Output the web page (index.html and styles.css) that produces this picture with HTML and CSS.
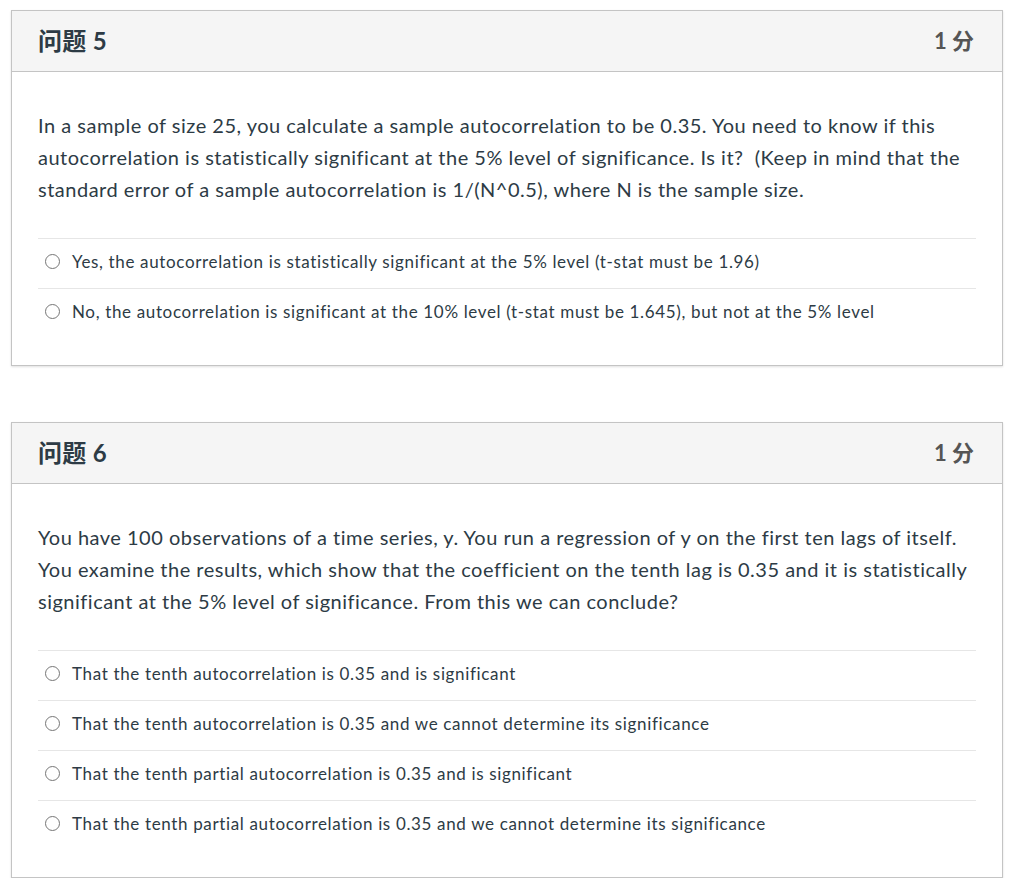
FILE: index.html
```html
<!DOCTYPE html>
<html lang="zh-CN">
<head>
  <meta charset="UTF-8">
  <meta name="viewport" content="width=device-width, initial-scale=1.0">
  <title>测验</title>
  <link rel="stylesheet" href="styles.css">
</head>
<body>
  <div class="quiz">
    <div class="question">
      <div class="question__header">
        <div class="question__name">问题 5</div>
        <div class="question__points">1 分</div>
      </div>
      <div class="question__body">
        <div class="question__text">In a sample of size 25, you calculate a sample autocorrelation to be 0.35. You need to know if this autocorrelation is statistically significant at the 5% level of significance. Is it?&nbsp; (Keep in mind that the standard error of a sample autocorrelation is 1/(N^0.5), where N is the sample size.</div>
        <div class="answers">
          <label class="answer"><span class="answer__radio"></span><span class="answer__text">Yes, the autocorrelation is statistically significant at the 5% level (t-stat must be 1.96)</span></label>
          <label class="answer"><span class="answer__radio"></span><span class="answer__text">No, the autocorrelation is significant at the 10% level (t-stat must be 1.645), but not at the 5% level</span></label>
        </div>
      </div>
    </div>

    <div class="question">
      <div class="question__header">
        <div class="question__name">问题 6</div>
        <div class="question__points">1 分</div>
      </div>
      <div class="question__body">
        <div class="question__text">You have 100 observations of a time series, y. You run a regression of y on the first ten lags of itself. You examine the results, which show that the coefficient on the tenth lag is 0.35 and it is statistically significant at the 5% level of significance. From this we can conclude?</div>
        <div class="answers">
          <label class="answer"><span class="answer__radio"></span><span class="answer__text">That the tenth autocorrelation is 0.35 and is significant</span></label>
          <label class="answer"><span class="answer__radio"></span><span class="answer__text">That the tenth autocorrelation is 0.35 and we cannot determine its significance</span></label>
          <label class="answer"><span class="answer__radio"></span><span class="answer__text">That the tenth partial autocorrelation is 0.35 and is significant</span></label>
          <label class="answer"><span class="answer__radio"></span><span class="answer__text">That the tenth partial autocorrelation is 0.35 and we cannot determine its significance</span></label>
        </div>
      </div>
    </div>
  </div>
</body>
</html>
```

FILE: styles.css
```css
/* General styles */
body {
  margin: 0;
  background: #fff;
  font-family: Lato, "Noto Sans CJK SC", sans-serif;
  color: #2d3b45;
}

.quiz {
  width: 992px;
  padding: 10px 0 0 11px;
}

.question {
  border: 1px solid #c4c4c4;
  box-shadow: 0 1px 2px rgba(0,0,0,.12);
  margin-bottom: 56px;
  background: #fff;
}

.question:last-child {
  margin-bottom: 0;
}

.question__header {
  display: flex;
  justify-content: space-between;
  align-items: center;
  height: 56px;
  padding: 0 28px 4px 26px;
  background: #f5f5f5;
  border-bottom: 1px solid #c4c4c4;
}

.question__name {
  font-size: 24px;
  font-weight: 700;
  letter-spacing: 0.3px;
  color: #2d3b45;
}

.question__points {
  font-size: 22px;
  font-weight: 700;
  color: #555;
}

.question__body {
  padding: 37px 26px 27px;
}

.question__text {
  font-size: 20px;
  letter-spacing: 0.5px;
  line-height: 32px;
}

.answers {
  margin-top: 33px;
}

.answer {
  display: flex;
  align-items: center;
  height: 45px;
  padding-bottom: 4px;
  border-top: 1px solid #e6e6e6;
  font-size: 17px;
  letter-spacing: 0.65px;
}

.answer__radio {
  width: 13px;
  height: 13px;
  border: 1.3px solid #767676;
  border-radius: 50%;
  margin: 0 12px 0 7px;
  flex: 0 0 auto;
}
```
